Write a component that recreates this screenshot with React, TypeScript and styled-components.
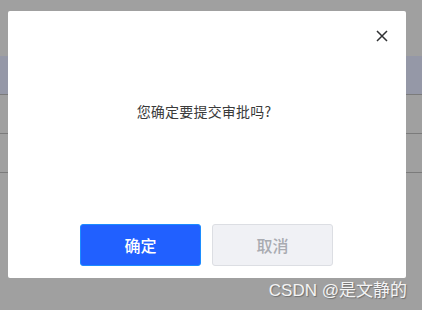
import React from "react";
import styled, { createGlobalStyle } from "styled-components";

const GlobalStyle = createGlobalStyle`
  html, body {
    margin: 0;
    padding: 0;
    background: #a0a0a0;
  }
  body {
    font-family: "Noto Sans CJK SC", "Noto Sans", sans-serif;
  }
`;

const Page = styled.div`
  position: relative;
  width: 422px;
  height: 310px;
  overflow: hidden;
  background: #a0a0a0;
  display: flex;
  flex-direction: column;
`;

const TopSpace = styled.div`
  height: 56px;
`;

const TableHead = styled.div`
  height: 38px;
  background: #9598a7;
  border-bottom: 1px solid #7b7b7b;
`;

const TableRow = styled.div`
  height: 38px;
  border-bottom: 1px solid #7b7b7b;
`;

const Modal = styled.div`
  position: absolute;
  left: 8px;
  top: 11px;
  width: 398px;
  height: 267px;
  background: #fff;
  border-radius: 2px;
  box-sizing: border-box;
  display: flex;
  flex-direction: column;
  align-items: center;
`;

const Close = styled.button`
  position: absolute;
  top: 17px;
  right: 16px;
  width: 16px;
  height: 16px;
  padding: 0;
  border: none;
  background: none;
  display: flex;
  align-items: center;
  justify-content: center;
  cursor: pointer;
`;

const Message = styled.div`
  margin-top: 89px;
  margin-right: 6px;
  font-size: 14px;
  line-height: 22px;
  letter-spacing: 0.2px;
  color: #3a3a3a;
`;

const Footer = styled.div`
  margin-top: auto;
  margin-bottom: 12px;
  display: flex;
  gap: 11px;
  margin-right: 1px;
`;

const Button = styled.button<{ $primary?: boolean }>`
  width: 121px;
  height: 42px;
  border-radius: 3px;
  box-sizing: border-box;
  font-family: "Noto Sans CJK SC", sans-serif;
  font-size: 16px;
  font-weight: 500;
  cursor: pointer;
  border: 1px solid ${(p) => (p.$primary ? "#1c8cff" : "#dcdee3")};
  background: ${(p) => (p.$primary ? "#2160ff" : "#f0f1f5")};
  color: ${(p) => (p.$primary ? "#fff" : "#a9abb1")};
`;

const Watermark = styled.div`
  position: absolute;
  right: 15px;
  top: 280px;
  font-family: "Liberation Sans", "Noto Sans CJK SC", sans-serif;
  font-size: 17px;
  line-height: 22px;
  color: #f4f4f4;
  text-shadow: 1px 1px 1px #6f6f6f;
`;

const App = (): JSX.Element => {
  return (
    <Page>
      <GlobalStyle />
      <TopSpace />
      <TableHead />
      <TableRow />
      <TableRow />
      <Modal>
        <Close aria-label="close">
          <svg width="12" height="12" viewBox="0 0 12 12">
            <path d="M1 1 L11 11 M11 1 L1 11" stroke="#303133" strokeWidth="1.5" />
          </svg>
        </Close>
        <Message>您确定要提交审批吗?</Message>
        <Footer>
          <Button $primary>确定</Button>
          <Button>取消</Button>
        </Footer>
      </Modal>
      <Watermark>CSDN @是文静的</Watermark>
    </Page>
  );
};

export default App;
